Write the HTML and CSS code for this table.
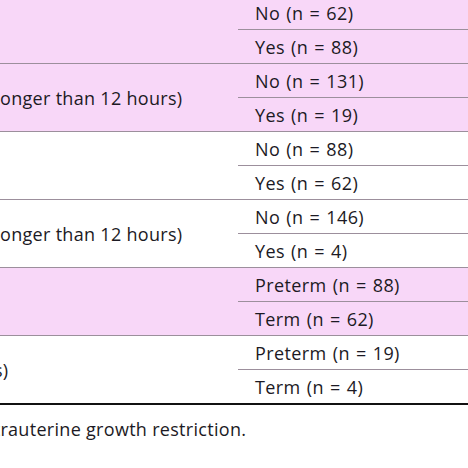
FILE: index.html
```html
<!DOCTYPE html>
<html>
<head>
<meta charset="utf-8">
<link rel="stylesheet" href="styles.css">
</head>
<body>
<div class="viewport">
  <div class="table">
    <div class="group pink">
      <div class="label">Twin pregnancy</div>
      <div class="vals"><div class="val">No (n = 62)</div><div class="val">Yes (n = 88)</div></div>
    </div>
    <div class="group pink">
      <div class="label">Premature rupture of membranes (longer than 12 hours)</div>
      <div class="vals"><div class="val">No (n = 131)</div><div class="val">Yes (n = 19)</div></div>
    </div>
    <div class="group">
      <div class="label">Preeclampsia</div>
      <div class="vals"><div class="val">No (n = 88)</div><div class="val">Yes (n = 62)</div></div>
    </div>
    <div class="group">
      <div class="label">Premature rupture of membranes (longer than 12 hours)</div>
      <div class="vals"><div class="val">No (n = 146)</div><div class="val">Yes (n = 4)</div></div>
    </div>
    <div class="group pink">
      <div class="label">Delivery</div>
      <div class="vals"><div class="val">Preterm (n = 88)</div><div class="val">Term (n = 62)</div></div>
    </div>
    <div class="group last">
      <div class="label">Delivery in IUGR cases (&lt; 37.0 weeks)</div>
      <div class="vals"><div class="val">Preterm (n = 19)</div><div class="val">Term (n = 4)</div></div>
    </div>
  </div>
  <p class="caption">IUGR, intrauterine growth restriction.</p>
</div>
</body>
</html>
```

FILE: styles.css
```css
html, body {
  margin: 0;
  padding: 0;
  background: #ffffff;
  overflow: hidden;
}
.viewport {
  width: 468px;
  height: 468px;
  overflow: hidden;
  font-family: "Open Sans", sans-serif;
  font-size: 18px;
  color: #1c1a24;
}
.table {
  margin-top: -4px;
  margin-left: -311px;
  width: 779px;
}
.group {
  display: grid;
  grid-template-columns: 549px 230px;
  border-bottom: 1px solid #9c8f9c;
}
.group.pink {
  background: #f8d7f8;
}
.group.last {
  border-bottom: 2px solid #111111;
}
.label {
  display: flex;
  align-items: center;
  white-space: nowrap;
  letter-spacing: 0.3px;
}
.vals {
  display: flex;
  flex-direction: column;
}
.val {
  box-sizing: border-box;
  height: 33px;
  display: flex;
  align-items: center;
  padding-left: 17px;
  letter-spacing: 0.4px;
  word-spacing: 1px;
}
.val:first-child {
  height: 34px;
  border-bottom: 1px solid #9c8f9c;
}
.caption {
  margin: 12px 0 0 0;
  text-indent: -76px;
  letter-spacing: 0.3px;
  white-space: nowrap;
}
```
